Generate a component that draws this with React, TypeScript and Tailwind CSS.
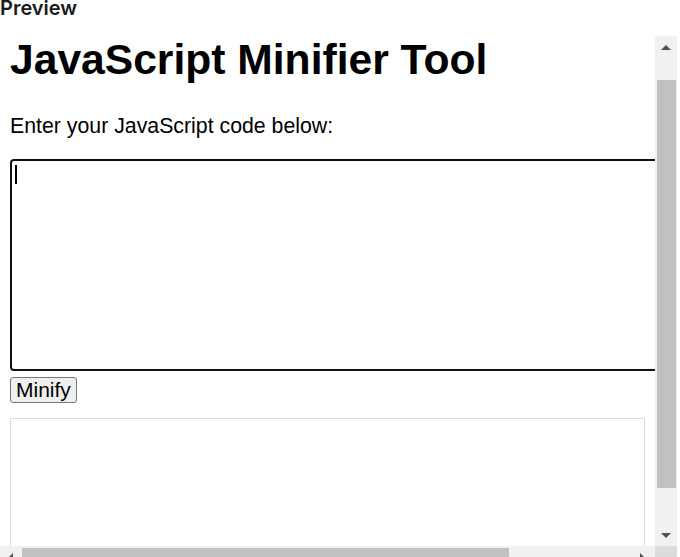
export default function App() {
  return (
    <div className="w-[680px] h-[557px] overflow-hidden bg-white">
      <p className="font-['Inter',sans-serif] font-semibold text-[20px] leading-[17px] text-[#1a1a1a]">
        Preview
      </p>

      {/* preview frame */}
      <div className="mt-[19px] flex flex-col w-[677px] h-[531px]">
        <div className="flex h-[510px]">
          <div className="flex-1 overflow-hidden pl-[10px] flex flex-col items-start font-['Liberation_Sans',Arial,sans-serif] text-black">
            <h1 className="text-[42.6px] font-bold leading-[46px] whitespace-nowrap">
              JavaScript Minifier Tool
            </h1>
            <p className="mt-[32px] text-[21.3px] leading-[24px] whitespace-nowrap">
              Enter your JavaScript code below:
            </p>
            <div className="mt-[21px] shrink-0 w-[806px] h-[212px] border-2 border-[#101010] rounded-[4px] pt-[4px] pl-[3px]">
              <div className="w-[2px] h-[19px] bg-black" />
            </div>
            <button className="mt-[6px] h-[27px] px-[5px] text-[21px] leading-[24px] bg-[#efefef] border border-[#767676] rounded-[3px] text-black">
              Minify
            </button>
            <div className="mt-[15px] shrink-0 w-[635px] h-[200px] border border-[#dcdcdc]" />
          </div>

          {/* vertical scrollbar */}
          <div className="w-[22px] bg-[#f1f1f1] flex flex-col">
            <div className="h-[22px] flex items-center justify-center">
              <div className="w-0 h-0 border-l-[5px] border-r-[5px] border-b-[5px] border-l-transparent border-r-transparent border-b-[#505050]" />
            </div>
            <div className="flex-1 pt-[22px] pb-[36px] pl-[2px]">
              <div className="w-[19px] h-full bg-[#c1c1c1]" />
            </div>
            <div className="h-[22px] flex items-center justify-center">
              <div className="w-0 h-0 border-l-[5px] border-r-[5px] border-t-[5px] border-l-transparent border-r-transparent border-t-[#505050]" />
            </div>
          </div>
        </div>

        {/* horizontal scrollbar */}
        <div className="flex h-[21px]">
          <div className="flex-1 bg-[#f1f1f1] flex items-start pt-[2px]">
            <div className="w-[22px] h-[17px] flex items-center justify-center">
              <div className="w-0 h-0 border-t-[4px] border-b-[4px] border-r-[4px] border-t-transparent border-b-transparent border-r-[#505050]" />
            </div>
            <div className="w-[487px] h-[17px] bg-[#c1c1c1]" />
            <div className="flex-1" />
            <div className="w-[26px] h-[17px] flex items-center justify-center">
              <div className="w-0 h-0 border-t-[4px] border-b-[4px] border-l-[4px] border-t-transparent border-b-transparent border-l-[#505050]" />
            </div>
          </div>
          <div className="w-[22px] bg-[#dcdcdc]" />
        </div>
      </div>
    </div>
  );
}
